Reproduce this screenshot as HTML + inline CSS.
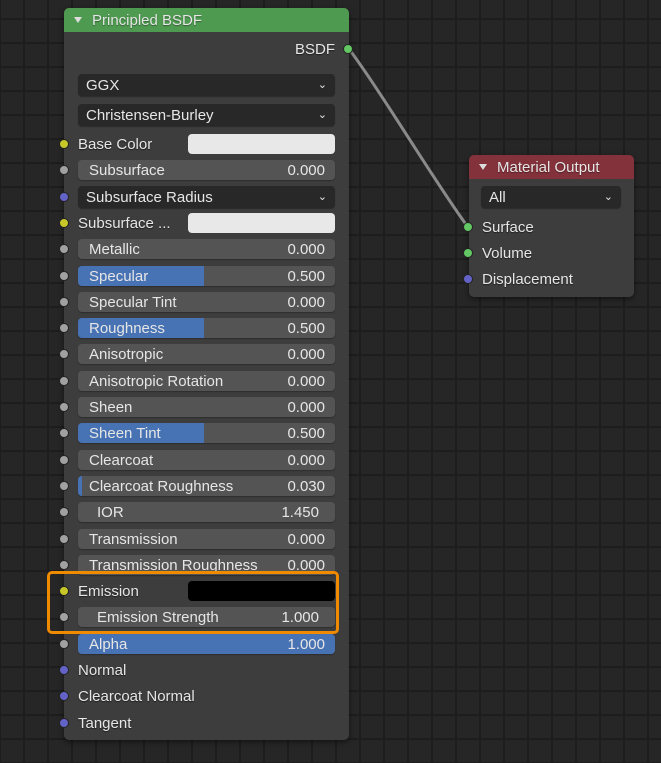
<!DOCTYPE html>
<html><head><meta charset="utf-8"><style>
*{margin:0;padding:0;box-sizing:border-box}
body{width:661px;height:763px;overflow:hidden;background-color:#262626;
background-image:linear-gradient(90deg,#1d1d1d 2px,transparent 2px),linear-gradient(#1d1d1d 2px,transparent 2px);
background-size:24px 24px;background-position:-1px 18px;
font-family:"Liberation Sans","DejaVu Sans",sans-serif;font-size:15px;color:#e6e6e6;position:relative}
.a{position:absolute}
.node{position:absolute;background:#3d3d3d;border-radius:5px;box-shadow:0 2px 6px rgba(0,0,0,.5)}
.hdr{position:absolute;left:0;right:0;top:0;height:24px;border-radius:5px 5px 0 0;padding-left:28px;line-height:25px;text-shadow:0 1px 1px #0006}
.tri{position:absolute;left:10px;top:9px;width:0;height:0;border-left:4px solid transparent;border-right:4px solid transparent;border-top:6px solid #ddd}
.sock{position:absolute;width:10px;height:10px;border-radius:50%;border:1px solid #222}
.fld{position:absolute;height:20px;border-radius:4px;background:#545454;line-height:21px;overflow:hidden;box-shadow:0 1px 1px #0004}
.fld .f{position:absolute;left:0;top:0;bottom:0;background:#4772b3}
.fld .l{position:absolute;left:11px;top:0}
.fld .v{position:absolute;right:10px;top:0}
.dd{position:absolute;height:22px;border-radius:4px;background:#282828;line-height:23px;padding-left:8px;box-shadow:0 1px 1px #0005}
.dd .c{position:absolute;right:8px;top:0;font-size:11px}
.lbl{position:absolute;line-height:21px;text-shadow:0 1px 1px #0008}
.col{position:absolute;height:20px;border-radius:4px;background:#e8e8e8}
</style></head><body>
<svg class="a" style="left:0;top:0" width="661" height="763"><path d="M349 49 C380 90,440 190,468 227" stroke="#8a8a8a" stroke-width="3" fill="none"/></svg>

<div class="node" style="left:64px;top:8px;width:285px;height:732px">
<div class="hdr" style="background:#4e9a50"><div class="tri"></div>Principled BSDF</div>
<div class="lbl" style="right:14px;top:31px">BSDF</div>
<div class="dd" style="left:14px;top:66px;width:257px">GGX<span class="c">&#8964;</span></div>
<div class="dd" style="left:14px;top:96px;width:257px">Christensen-Burley<span class="c">&#8964;</span></div>
</div>
<div class="sock" style="left:343px;top:44px;background:#63c763"></div>

<div class="node" style="left:469px;top:155px;width:165px;height:142px">
<div class="hdr" style="background:#83313a"><div class="tri"></div>Material Output</div>
<div class="dd" style="left:12px;top:31px;width:140px">All<span class="c">&#8964;</span></div>
<div class="lbl" style="left:13px;top:62px">Surface</div>
<div class="lbl" style="left:13px;top:88px">Volume</div>
<div class="lbl" style="left:13px;top:114px">Displacement</div>
</div>
<div class="sock" style="left:463px;top:222px;background:#63c763"></div>
<div class="sock" style="left:463px;top:248px;background:#63c763"></div>
<div class="sock" style="left:463px;top:274px;background:#6363c7"></div>

<div id="rows"></div>
<div class="a" style="left:47px;top:571px;width:292px;height:63px;border:3px solid #f08a00;border-radius:5px"></div>
<script>
var Y='#c7c729',G='#a1a1a1',B='#6363c7';
var rows=[
['c','Base Color',Y,'#e8e8e8'],['s','Subsurface',G,0,'0.000'],['d','Subsurface Radius',B],['c','Subsurface ...',Y,'#e8e8e8'],
['s','Metallic',G,0,'0.000'],['s','Specular',G,.49,'0.500'],['s','Specular Tint',G,0,'0.000'],['s','Roughness',G,.49,'0.500'],
['s','Anisotropic',G,0,'0.000'],['s','Anisotropic Rotation',G,0,'0.000'],['s','Sheen',G,0,'0.000'],['s','Sheen Tint',G,.49,'0.500'],
['s','Clearcoat',G,0,'0.000'],['s','Clearcoat Roughness',G,.015,'0.030'],['s','IOR',G,0,'1.450',1],['s','Transmission',G,0,'0.000'],
['s','Transmission Roughness',G,0,'0.000'],['c','Emission',Y,'#000'],['s','Emission Strength',G,0,'1.000',1],['s','Alpha',G,1,'1.000'],
['n','Normal',B],['n','Clearcoat Normal',B],['n','Tangent',B]];
var h='';
rows.forEach(function(r,i){var cy=Math.round(144+i*26.3);
h+='<div class="sock" style="left:59px;top:'+(cy-5)+'px;background:'+r[2]+'"></div>';
if(r[0]=='c'){h+='<div class="lbl" style="left:78px;top:'+(cy-10)+'px">'+r[1]+'</div><div class="col" style="left:188px;width:147px;top:'+(cy-10)+'px;background:'+r[3]+'"></div>';}
else if(r[0]=='n'){h+='<div class="lbl" style="left:78px;top:'+(cy-10)+'px">'+r[1]+'</div>';}
else if(r[0]=='d'){h+='<div class="dd" style="left:78px;width:257px;top:'+(cy-11)+'px">'+r[1]+'<span class="c">&#8964;</span></div>';}
else{h+='<div class="fld" style="left:78px;width:257px;top:'+(cy-10)+'px"><div class="f" style="width:'+(r[3]*257)+'px"></div><span class="l" style="left:'+(r[5]?19:11)+'px">'+r[1]+'</span><span class="v" style="right:'+(r[5]?16:10)+'px">'+r[4]+'</span></div>';}
});
document.getElementById('rows').innerHTML=h;
</script>
</body></html>
